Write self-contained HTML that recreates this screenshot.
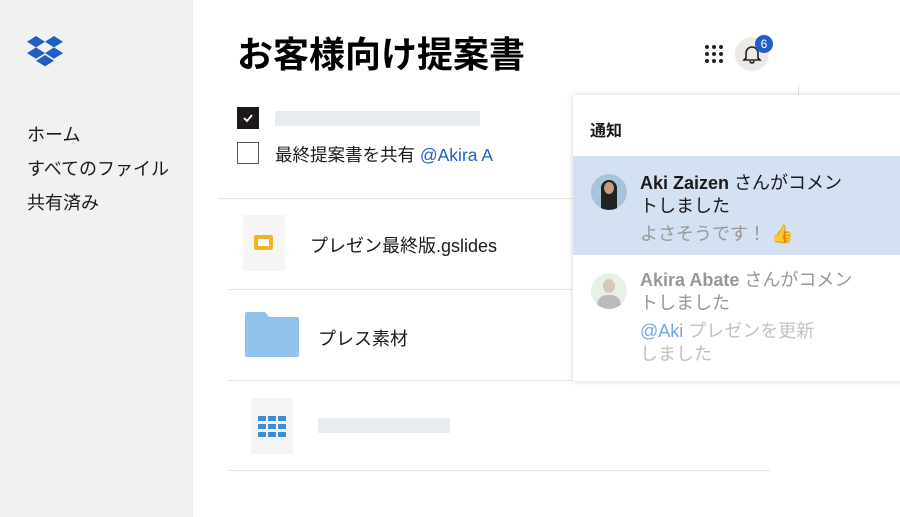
<!DOCTYPE html>
<html><head><meta charset="utf-8"><style>
*{margin:0;padding:0;box-sizing:border-box}
body{width:900px;height:517px;overflow:hidden;background:#fff;font-family:"Liberation Sans","Noto Sans CJK JP",sans-serif;color:#1e1919;position:relative}
.a{position:absolute}
.side{left:0;top:0;width:193px;height:517px;background:#f1f1f1}
.nav{left:27px;font-size:18px;color:#1e1919}
.line{height:1px;background:#e6e2e0}
.bar{background:#e8ebf0;height:15px}
</style></head><body>
<div class="a side"></div>
<svg class="a" style="left:27px;top:36px" width="36" height="32" viewBox="0 0 36 32"><g fill="#1f5fc6">
<path d="M9 0l9 5.7-9 5.7-9-5.7z"/><path d="M27 0l9 5.7-9 5.7-9-5.7z"/><path d="M0 17.1l9-5.7 9 5.7-9 5.7z"/><path d="M27 11.4l9 5.7-9 5.7-9-5.7z"/><path d="M18 19l9 5.7-9 5.7-9-5.7z"/></g></svg>
<div class="a nav" style="top:121px">ホーム</div>
<div class="a nav" style="top:155px">すべてのファイル</div>
<div class="a nav" style="top:189px">共有済み</div>

<div class="a" style="left:237px;top:33px;font-size:36px;font-weight:bold;color:#000;line-height:44px">お客様向け提案書</div>
<svg class="a" style="left:704px;top:44px" width="20" height="20"><g fill="#222"><circle cx="3" cy="3" r="2"/><circle cx="10" cy="3" r="2"/><circle cx="17" cy="3" r="2"/><circle cx="3" cy="10" r="2"/><circle cx="10" cy="10" r="2"/><circle cx="17" cy="10" r="2"/><circle cx="3" cy="17" r="2"/><circle cx="10" cy="17" r="2"/><circle cx="17" cy="17" r="2"/></g></svg>
<div class="a" style="left:735px;top:37px;width:34px;height:34px;border-radius:50%;background:#ede9e4"></div>
<svg class="a" style="left:741px;top:43px" width="22" height="22" viewBox="0 0 22 22"><path d="M5 15V10a6 6 0 0112 0v5l2 2H3z M9 18a2 2 0 004 0" fill="none" stroke="#222" stroke-width="1.6"/></svg>
<div class="a" style="left:755px;top:35px;width:18px;height:18px;border-radius:50%;background:#1f5fc6;color:#fff;font-size:12px;text-align:center;line-height:18px">6</div>

<div class="a" style="left:237px;top:107px;width:22px;height:22px;background:#1e1919"></div>
<svg class="a" style="left:241px;top:111px" width="14" height="14"><path d="M3 7l3 3 5-6" fill="none" stroke="#fff" stroke-width="1.8"/></svg>
<div class="a bar" style="left:275px;top:111px;width:205px"></div>
<div class="a" style="left:237px;top:142px;width:22px;height:22px;border:1.5px solid #555;background:#fff"></div>
<div class="a" style="left:275px;top:142px;font-size:17.5px">最終提案書を共有 <span style="color:#1f5fc6">@Akira A</span></div>
<div class="a line" style="left:218px;top:198px;width:355px"></div>

<div class="a" style="left:243px;top:215px;width:42px;height:56px;background:#f5f5f5"></div>
<div class="a" style="left:254px;top:235px;width:19px;height:15px;border-radius:2px;background:#f0b429"></div>
<div class="a" style="left:258px;top:239px;width:11px;height:7px;background:#fff"></div>
<div class="a" style="left:310px;top:232px;font-size:18px">プレゼン最終版.gslides</div>
<div class="a line" style="left:228px;top:289px;width:345px"></div>

<svg class="a" style="left:245px;top:312px" width="54" height="45"><path d="M2 0h18l4 5h28a2 2 0 012 2v36a2 2 0 01-2 2H2a2 2 0 01-2-2V2a2 2 0 012-2z" fill="#90c2ec"/></svg>
<div class="a" style="left:318px;top:325px;font-size:18px">プレス素材</div>
<div class="a line" style="left:228px;top:380px;width:345px"></div>

<div class="a" style="left:251px;top:398px;width:42px;height:56px;background:#f5f5f5"></div>
<svg class="a" style="left:258px;top:416px" width="28" height="21"><g fill="#3d8fd8"><rect x="0" y="0" width="8" height="5"/><rect x="10" y="0" width="8" height="5"/><rect x="20" y="0" width="8" height="5"/><rect x="0" y="8" width="8" height="5"/><rect x="10" y="8" width="8" height="5"/><rect x="20" y="8" width="8" height="5"/><rect x="0" y="16" width="8" height="5"/><rect x="10" y="16" width="8" height="5"/><rect x="20" y="16" width="8" height="5"/></g></svg>
<div class="a bar" style="left:318px;top:418px;width:132px"></div>
<div class="a line" style="left:228px;top:470px;width:542px"></div>

<div class="a" style="left:798px;top:85px;width:1px;height:12px;background:#ddd"></div>
<div class="a" style="left:573px;top:95px;width:340px;height:286px;background:#fff;box-shadow:0 0 6px rgba(0,0,0,.18)"></div>
<div class="a" style="left:590px;top:117px;font-size:16px;font-weight:bold">通知</div>
<div class="a" style="left:573px;top:156px;width:327px;height:99px;background:#d3e1f2"></div>
<div class="a" style="left:591px;top:174px;width:36px;height:36px;border-radius:50%;background:#a8c4dc;overflow:hidden"><div style="position:absolute;left:10px;top:6px;width:16px;height:30px;background:#222;border-radius:8px 8px 0 0"></div><div style="position:absolute;left:13px;top:8px;width:10px;height:12px;background:#c99a7e;border-radius:50%"></div></div>
<div class="a" style="left:640px;top:172px;font-size:18px;line-height:23px;color:#1e1919"><b>Aki Zaizen</b> さんがコメン<br>トしました</div>
<div class="a" style="left:640px;top:220px;font-size:18px;color:#9a9896">よさそうです！ <span style="color:#f0b429">👍</span></div>
<div class="a" style="left:591px;top:273px;width:36px;height:36px;border-radius:50%;background:#e8f1e8;overflow:hidden"><div style="position:absolute;left:6px;top:22px;width:24px;height:14px;background:#bbb;border-radius:10px 10px 0 0"></div><div style="position:absolute;left:12px;top:6px;width:12px;height:14px;background:#d8c8bb;border-radius:50%"></div></div>
<div class="a" style="left:640px;top:269px;font-size:18px;line-height:23px;color:#9a9896"><b>Akira Abate</b> さんがコメン<br>トしました</div>
<div class="a" style="left:640px;top:320px;font-size:18px;line-height:23px;color:#c4c2c0"><span style="color:#75a6e6">@Aki</span> プレゼンを更新<br>しました</div>
</body></html>
